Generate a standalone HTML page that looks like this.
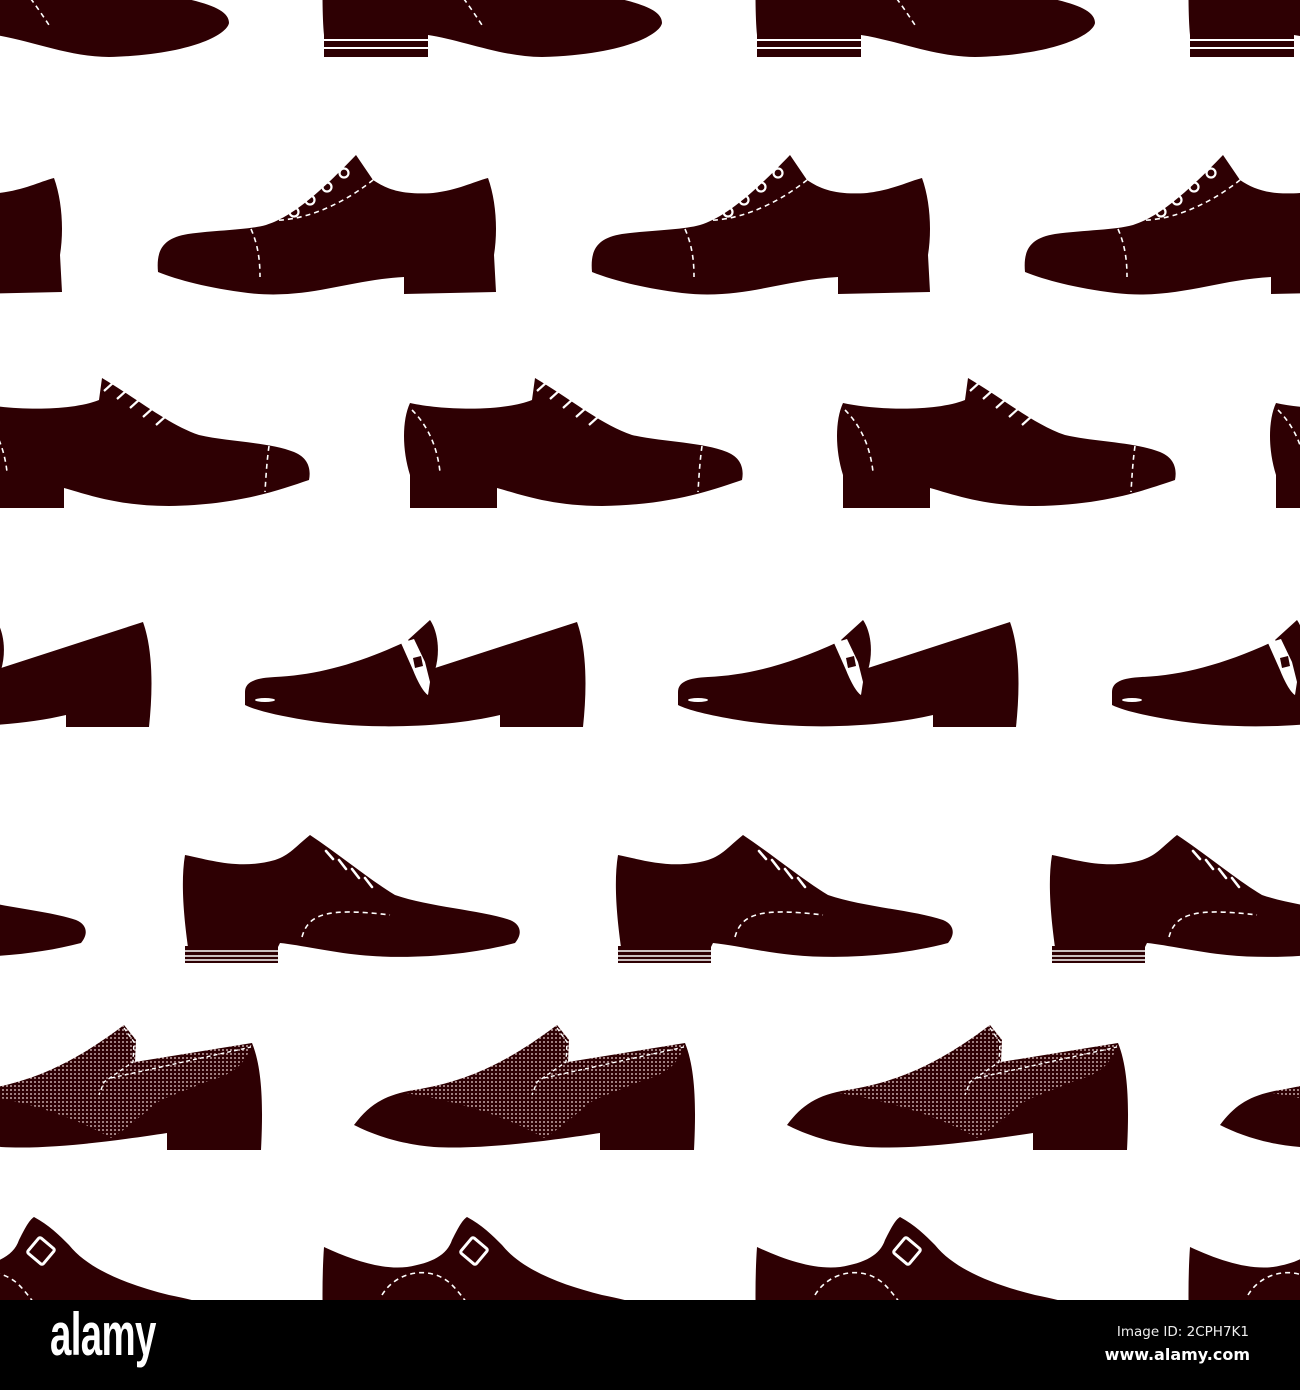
<!DOCTYPE html>
<html><head><meta charset="utf-8"><style>
html,body{margin:0;padding:0;background:#fff;}
#wrap{position:relative;width:1300px;height:1390px;overflow:hidden;background:#fff;}
svg{position:absolute;left:0;top:0;}
#bar{position:absolute;left:0;top:1300px;width:1300px;height:90px;background:#000;}
#logo{position:absolute;left:50px;top:5px;line-height:60px;color:#fff;font-family:"Liberation Sans",sans-serif;font-weight:bold;font-size:60px;letter-spacing:-1px;transform:scaleX(0.64);transform-origin:left top;}
#id1{position:absolute;right:51px;top:24px;line-height:17px;color:#eee;font-family:"DejaVu Sans",sans-serif;font-size:13.5px;}
#id2{position:absolute;right:50px;top:45px;line-height:20px;color:#fff;font-family:"DejaVu Sans",sans-serif;font-weight:bold;font-size:16px;}
</style></head><body><div id="wrap">
<svg width="1300" height="1300" viewBox="0 0 1300 1300">
<defs>
<pattern id="dots" width="4" height="4" patternUnits="userSpaceOnUse"><circle cx="2" cy="2" r="0.9" fill="#f0d8d8"/></pattern>
<g id="A">
<path fill="#2e0003" d="M10,132 C8,110 15,98 40,94 C70,90 100,90 118,85 C140,78 165,60 208,15 L225,40 C240,50 255,55 285,53 C310,50 325,42 340,38 C348,60 350,90 346,115 L348,152 L256,154 L256,137 C200,140 160,160 100,153 C60,148 30,140 10,132 Z"/>
<path d="M103,89 C110,105 112,120 112,137" stroke="#fff" stroke-width="1.6" stroke-dasharray="5,4" fill="none"/>
<path d="M122,80 C150,82 190,68 225,40" stroke="#fff" stroke-width="1.6" stroke-dasharray="5,4" fill="none"/>
<g stroke="#fff" stroke-width="2.2" fill="none"><circle cx="146" cy="72" r="4.5"/><circle cx="162" cy="60" r="4.5"/><circle cx="179" cy="47" r="4.5"/><circle cx="196" cy="33" r="4.5"/></g>
</g>
<g id="B">
<path fill="#2e0003" d="M8,33 C40,40 100,42 130,30 L133,8 C170,30 200,55 230,65 C260,72 300,72 325,82 C340,88 342,100 340,110 C310,120 270,135 200,136 C150,136 120,125 95,118 L95,138 L8,138 L8,105 C0,80 0,50 8,33 Z"/>
<path d="M10,40 C25,55 35,75 38,102" stroke="#fff" stroke-width="1.6" stroke-dasharray="5,4" fill="none"/>
<path d="M300,76 C298,90 297,105 296,122" stroke="#fff" stroke-width="1.6" stroke-dasharray="5,4" fill="none"/>
<g stroke="#fff" stroke-width="2.2"><line x1="135" y1="21" x2="145" y2="12"/><line x1="148" y1="29" x2="158" y2="20"/><line x1="161" y1="38" x2="171" y2="29"/><line x1="174" y1="47" x2="184" y2="38"/><line x1="187" y1="55" x2="197" y2="46"/></g>
</g>
<g id="C">
<path fill="#2e0003" d="M0,72 C0,62 10,58 30,57 C70,55 110,45 160,22 L172,20 L190,48 L332,2 C342,30 342,70 338,107 L255,107 L255,95 C200,108 120,110 60,100 C30,95 10,90 0,85 Z"/>
<path fill="#2e0003" d="M163,20 L185,0 C192,10 196,30 190,50 Z"/>
<path fill="#fff" d="M156,23 L169,19 L180,42 L185,62 L183,75 C178,72 172,60 168,50 Z"/>
<path fill="#2e0003" d="M168,38 L176,36 L178,46 L170,48 Z"/>
<ellipse cx="20" cy="80" rx="10" ry="2" fill="#fff"/>
<path fill="#fff" d="M95,116 C150,116 200,112 238,100 C200,108 150,112 95,114 Z"/>
</g>
<g id="D">
<path fill="#2e0003" d="M5,20 C30,25 60,35 95,25 C110,20 115,12 130,0 C160,20 190,45 215,60 C250,72 300,75 330,85 C342,90 342,100 335,108 C290,120 230,125 180,120 C150,117 120,110 100,108 L98,112 L8,112 C5,90 0,50 5,20 Z"/>
<rect x="5" y="111" width="93" height="17" fill="#2e0003"/>
<g stroke="#fff" stroke-width="1.6"><line x1="5" y1="116" x2="98" y2="116"/><line x1="5" y1="121" x2="98" y2="121"/><line x1="5" y1="125" x2="98" y2="125"/></g>
<path d="M122,102 C128,80 145,72 210,80" stroke="#fff" stroke-width="1.6" stroke-dasharray="5,4" fill="none"/>
<g stroke="#fff" stroke-width="2.6" stroke-linecap="round"><line x1="146" y1="16" x2="153" y2="24"/><line x1="159" y1="25" x2="166" y2="34"/><line x1="172" y1="34" x2="179" y2="43"/><line x1="185" y1="43" x2="192" y2="52"/></g>
</g>
<g id="E">
<path fill="#2e0003" d="M0,105 C15,85 30,75 60,70 C110,62 150,45 203,5 L215,20 L214,42 L331,23 C342,50 342,90 340,130 L246,130 L246,113 C200,120 130,130 80,127 C45,124 20,115 0,105 Z"/>
<path fill="url(#dots)" d="M45,72 C110,62 150,45 203,5 L215,20 L214,42 L331,23 C325,45 310,55 290,60 L240,80 C220,95 205,110 190,118 C150,95 100,80 45,72 Z"/>
<path d="M203,8 L213,22 L212,42 L183,62 L178,75 M190,58 L330,27" stroke="#fff" stroke-width="1.4" stroke-dasharray="4,3" fill="none"/>
</g>
<g id="F">
<path fill="#2e0003" d="M2,32 C30,45 60,55 85,52 C110,48 125,40 130,25 C135,15 140,5 145,2 C160,10 170,20 180,30 C200,55 240,70 280,80 C320,88 340,95 340,108 C338,120 300,140 220,142 C180,142 140,125 106,120 L2,120 C0,100 0,60 2,32 Z"/>
<rect x="2" y="119" width="104" height="23" fill="#2e0003"/>
<g stroke="#fff" stroke-width="2"><line x1="2" y1="125" x2="106" y2="125"/><line x1="2" y1="133" x2="106" y2="133"/></g>
<rect x="142" y="26" width="20" height="20" rx="2" transform="rotate(40 152 36)" stroke="#fff" stroke-width="3" fill="none"/>
<path d="M60,80 C75,55 110,50 130,70 C140,80 150,95 160,110" stroke="#fff" stroke-width="1.6" stroke-dasharray="5,4" fill="none"/>
</g>
</defs>
<use href="#F" x="322" y="-85"/><use href="#F" x="755" y="-85"/><use href="#F" x="1188" y="-85"/><use href="#F" x="-111" y="-85"/>
<use href="#A" x="148" y="140"/><use href="#A" x="582" y="140"/><use href="#A" x="1015" y="140"/><use href="#A" x="-286" y="140"/>
<use href="#B" x="835" y="370"/><use href="#B" x="402" y="370"/><use href="#B" x="-31" y="370"/><use href="#B" x="1268" y="370"/>
<use href="#C" x="678" y="620"/><use href="#C" x="245" y="620"/><use href="#C" x="1112" y="620"/><use href="#C" x="-189" y="620"/>
<use href="#D" x="613" y="835"/><use href="#D" x="180" y="835"/><use href="#D" x="1047" y="835"/><use href="#D" x="-254" y="835"/>
<use href="#E" x="787" y="1020"/><use href="#E" x="354" y="1020"/><use href="#E" x="1220" y="1020"/><use href="#E" x="-79" y="1020"/>
<use href="#F" x="322" y="1215"/><use href="#F" x="755" y="1215"/><use href="#F" x="1188" y="1215"/><use href="#F" x="-111" y="1215"/>
</svg>
<div id="bar"><div id="logo">alamy</div><div id="id1">Image ID: 2CPH7K1</div><div id="id2">www.alamy.com</div></div>
</div></body></html>
